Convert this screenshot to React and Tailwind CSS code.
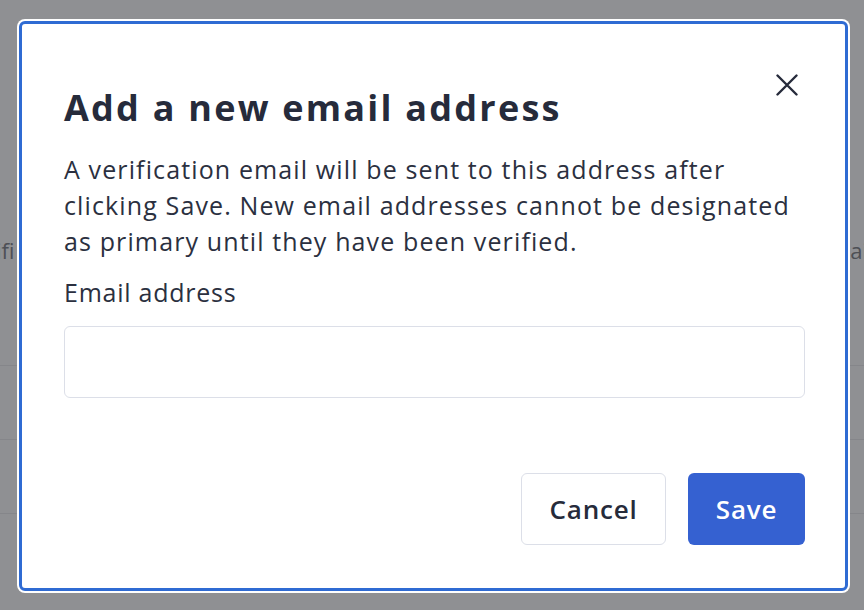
const font = { fontFamily: '"Open Sans", "Noto Sans", sans-serif' };

export default function App() {
  return (
    <div className="relative h-[610px] w-[864px] overflow-hidden bg-[#8f9093]" style={font}>
      {/* Page behind the overlay */}
      <div className="flex flex-col pt-[234px]">
        <div className="flex h-[131px] items-start justify-between text-[22px] text-[#4d4f55]">
          <span className="-ml-[4px]">ifi</span>
          <span className="-mr-[4px]">ai</span>
        </div>
        <div className="h-[74px] border-t border-[#85868a]" />
        <div className="h-[74px] border-t border-[#85868a]" />
        <div className="h-[74px] border-t border-[#85868a]" />
      </div>

      {/* Modal */}
      <div className="absolute left-[17px] top-[19px] h-[574px] w-[833px] rounded-[8px] bg-white p-[2px]">
        <div className="relative flex h-full flex-col rounded-[6px] border-[3px] border-[#2f6bd3] bg-white pl-[42px] pr-[40px] pt-[62px]">
          <button className="absolute right-[47px] top-[50px] text-[#262b3b]">
            <svg width="22" height="22" viewBox="0 0 22 22" fill="none" stroke="currentColor" strokeWidth="2.4" strokeLinecap="round">
              <path d="M1.5 1.5l19 19M20.5 1.5l-19 19" />
            </svg>
          </button>
          <h2 className="text-[36px] font-bold leading-[44px] tracking-[0.062em] text-[#262b3b]">Add a new email address</h2>
          <p className="mt-[21px] text-[25px] leading-[36px] tracking-[0.045em] text-[#2b3040]">
            A verification email will be sent to this address after clicking Save. New email addresses cannot be designated as primary until they have been verified.
          </p>
          <label className="mt-[15px] text-[25px] leading-[36px] tracking-[0.03em] text-[#2b3040]">Email address</label>
          <input className="mt-[16px] h-[72px] w-full rounded-[6px] border border-[#dcdfe8] px-4 text-[22px] outline-none" />
          <div className="mt-[75px] flex justify-end gap-[22px]">
            <button className="h-[72px] w-[145px] rounded-[6px] border border-[#dcdfe8] bg-white text-[26px] font-semibold tracking-[0.03em] text-[#262b3b]">
              Cancel
            </button>
            <button className="h-[72px] w-[117px] rounded-[6px] bg-[#3561d1] text-[26px] font-semibold tracking-[0.03em] text-white">
              Save
            </button>
          </div>
        </div>
      </div>
    </div>
  );
}
